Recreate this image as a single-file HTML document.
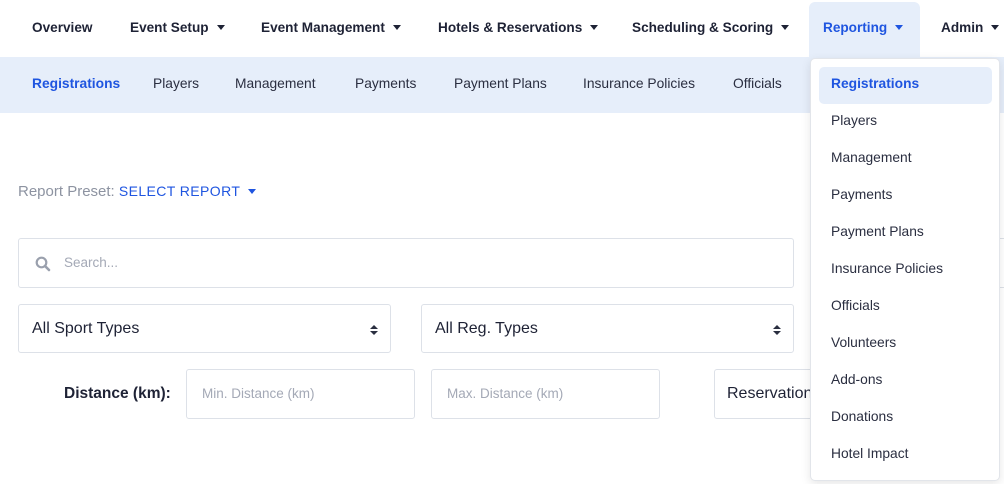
<!DOCTYPE html>
<html><head><style>
*{box-sizing:border-box;margin:0;padding:0}
body{width:1004px;height:484px;overflow:hidden;background:#fff;font-family:"Liberation Sans",sans-serif;color:#1e2235;position:relative}
.a{position:absolute;white-space:nowrap}
.top{font-size:13.6px;font-weight:bold;color:#1e2235;top:20px}
.car{display:inline-block;width:0;height:0;border-left:4.5px solid transparent;border-right:4.5px solid transparent;border-top:5px solid currentColor;vertical-align:middle;margin-left:8px;margin-top:-2px}
.sub{position:absolute;top:57px;left:0;width:1004px;height:56px;background:#e6eefa}
.st{font-size:13.8px;top:76px;color:#2a2e40}
.box{position:absolute;border:1px solid #dde1e8;border-radius:3px;background:#fff}
.ph{color:#a4a9b6;font-size:13.5px}
.sel{font-size:16px;color:#1e2235}
.ud{position:absolute;right:12px;top:19px;width:8px;height:12px}
.dd{position:absolute;left:810px;top:58px;width:190px;height:423px;background:#fff;border:1px solid #e2e5ea;border-radius:5px;box-shadow:0 3px 10px rgba(0,0,0,.1)}
.di{position:absolute;left:20px;font-size:13.8px;color:#2a2e40}
</style></head><body>
<div class="a top" style="left:32px">Overview</div>
<div class="a top" style="left:130px">Event Setup<span class="car"></span></div>
<div class="a top" style="left:261px">Event Management<span class="car"></span></div>
<div class="a top" style="left:438px">Hotels &amp; Reservations<span class="car"></span></div>
<div class="a top" style="left:632px">Scheduling &amp; Scoring<span class="car"></span></div>
<div class="sub"></div>
<div class="a" style="left:809px;top:2px;width:111px;height:56px;background:#e6eefa;border-radius:6px 6px 0 0"></div>
<div class="a top" style="left:823px;color:#1f55e0">Reporting<span class="car"></span></div>
<div class="a top" style="left:941px">Admin<span class="car"></span></div>
<div class="a st" style="left:32px;color:#1f55e0;font-weight:bold">Registrations</div>
<div class="a st" style="left:153px">Players</div>
<div class="a st" style="left:235px">Management</div>
<div class="a st" style="left:355px">Payments</div>
<div class="a st" style="left:454px">Payment Plans</div>
<div class="a st" style="left:583px">Insurance Policies</div>
<div class="a st" style="left:733px">Officials</div>
<div class="a" style="left:18px;top:183px;font-size:15px;color:#8d93a1">Report Preset: <span style="color:#1f55e0;font-size:14px;letter-spacing:0.4px">SELECT REPORT</span><span class="car" style="color:#1f55e0"></span></div>
<div class="box" style="left:18px;top:238px;width:776px;height:50px">
<svg style="position:absolute;left:16px;top:17px" width="16" height="16" viewBox="0 0 16 16"><circle cx="6.5" cy="6.5" r="4.8" fill="none" stroke="#9aa0ad" stroke-width="2.2"/><line x1="10" y1="10" x2="14" y2="14" stroke="#9aa0ad" stroke-width="2.6" stroke-linecap="round"/></svg>
<span class="a ph" style="left:45px;top:16px">Search...</span></div>
<div class="box" style="left:18px;top:304px;width:373px;height:49px"><span class="a sel" style="left:13px;top:15px">All Sport Types</span><svg class="ud" viewBox="0 0 8 12"><path d="M0 5L4 1L8 5Z M0 7L4 11L8 7Z" fill="#2a2e40"/></svg></div>
<div class="box" style="left:421px;top:304px;width:373px;height:49px"><span class="a sel" style="left:13px;top:15px">All Reg. Types</span><svg class="ud" viewBox="0 0 8 12"><path d="M0 5L4 1L8 5Z M0 7L4 11L8 7Z" fill="#2a2e40"/></svg></div>
<div class="a" style="left:64px;top:385px;font-size:15.5px;font-weight:bold">Distance (km):</div>
<div class="box" style="left:186px;top:369px;width:229px;height:50px"><span class="a ph" style="left:15px;top:16px">Min. Distance (km)</span></div>
<div class="box" style="left:431px;top:369px;width:229px;height:50px"><span class="a ph" style="left:15px;top:16px">Max. Distance (km)</span></div>
<div class="box" style="left:714px;top:369px;width:200px;height:50px;overflow:hidden"><span class="a sel" style="left:12px;top:15px">Reservation</span></div>
<div class="a" style="left:1000px;top:238px;width:4px;height:50px;border-top:1px solid #dde1e8;border-bottom:1px solid #dde1e8"></div>
<div class="dd">
<div class="a" style="left:8px;top:8px;width:173px;height:37px;background:#e6eefa;border-radius:5px"></div>
<div class="di" style="top:17px;color:#1f55e0;font-weight:bold">Registrations</div>
<div class="di" style="top:54px">Players</div>
<div class="di" style="top:91px">Management</div>
<div class="di" style="top:128px">Payments</div>
<div class="di" style="top:165px">Payment Plans</div>
<div class="di" style="top:202px">Insurance Policies</div>
<div class="di" style="top:239px">Officials</div>
<div class="di" style="top:276px">Volunteers</div>
<div class="di" style="top:313px">Add-ons</div>
<div class="di" style="top:350px">Donations</div>
<div class="di" style="top:387px">Hotel Impact</div>
</div>
</body></html>
